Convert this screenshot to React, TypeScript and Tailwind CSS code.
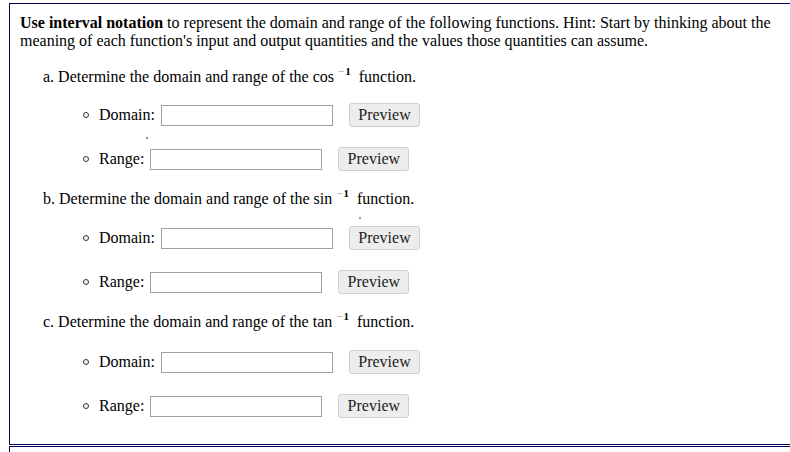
import React from "react";

const Sup = () => (
  <span className="relative top-[-7px] inline-block text-[11px] leading-none ml-[4px] mr-[8px]">
    <span className="text-[#9a9a9a] font-light">−</span>
    <span className="font-bold ml-[1px]">1</span>
  </span>
);

const Row = ({ label, mt }: { label: string; mt: string }) => (
  <div className={`flex items-center h-[24px] pl-[73px] ${mt}`}>
    <span className="w-[6px] h-[6px] rounded-full border border-[#333] mr-[10px]" />
    <span>{label}</span>
    <span className="ml-[6px] w-[172px] h-[21px] border border-[#a0a0a0] bg-white" />
    <button
      className="ml-[16px] h-[24px] w-[71px] rounded-[3px] border border-[#cfcfcf] bg-[#ededed] text-[16px] text-[#222] leading-none"
      style={{ fontFamily: '"Liberation Serif", "Times New Roman", serif' }}
    >
      Preview
    </button>
  </div>
);

const Heading = ({ letter, fn, mt }: { letter: string; fn: string; mt: string }) => (
  <div className={`pl-[33px] h-[18.4px] ${mt}`}>
    {letter}. Determine the domain and range of the {fn}
    <Sup />
    function.
  </div>
);

export default function App() {
  return (
    <div
      className="w-[790px] h-[452px] overflow-hidden bg-white text-black text-[16px] leading-[1.15] pt-[3px] pl-[9px]"
      style={{ fontFamily: '"Liberation Serif", "Times New Roman", serif' }}
    >
      <div className="w-[800px] h-[442px] border-l border-t border-b border-[#000055] pt-[10px]">
        <p className="pl-[10px]">
          <b>Use interval notation</b> to represent the domain and range of the following functions. Hint: Start by thinking about the
          <br />
          meaning of each function's input and output quantities and the values those quantities can assume.
        </p>
        <Heading letter="a" fn="cos" mt="mt-[17px]" />
        <Row label="Domain:" mt="mt-[17px]" />
        <div className="relative">
          <span className="absolute left-[136px] top-[10px] w-[2px] h-[2px] bg-[#5560b0] rounded-full" />
        </div>
        <Row label="Range:" mt="mt-[20px]" />
        <Heading letter="b" fn="sin" mt="mt-[19px]" />
        <div className="relative">
          <span className="absolute left-[349px] top-[8px] w-[2px] h-[2px] bg-[#777] rounded-full" />
        </div>
        <Row label="Domain:" mt="mt-[17.6px]" />
        <Row label="Range:" mt="mt-[20px]" />
        <Heading letter="c" fn="tan" mt="mt-[19px]" />
        <Row label="Domain:" mt="mt-[18.6px]" />
        <Row label="Range:" mt="mt-[20px]" />
      </div>
      <div className="mt-[1px] w-[800px] h-[20px] border-l border-t border-[#000055]" />
    </div>
  );
}
